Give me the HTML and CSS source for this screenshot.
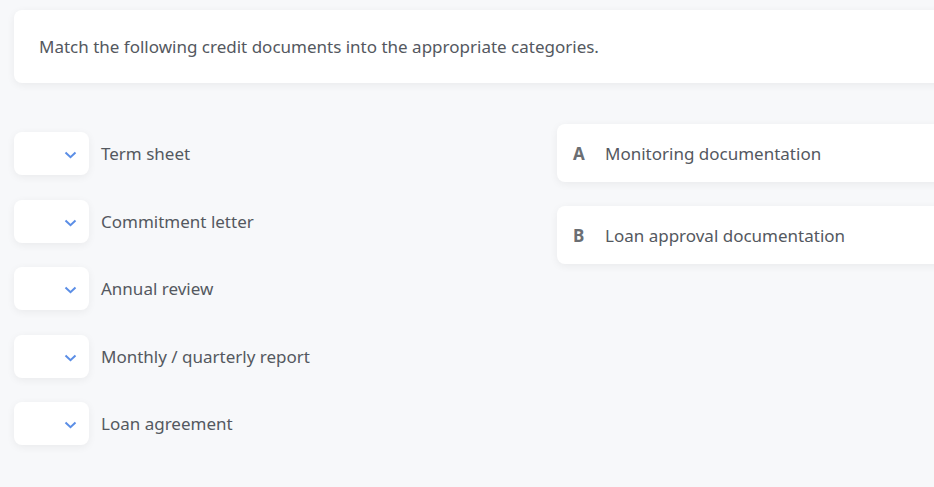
FILE: index.html
```html
<!DOCTYPE html>
<html lang="en">
<head>
    <meta charset="UTF-8">
    <meta name="viewport" content="width=device-width, initial-scale=1.0">
    <title>Matching question</title>
    <link rel="stylesheet" href="styles.css">
</head>
<body>
    <div class="page">
        <div class="question">
            <p>Match the following credit documents into the appropriate categories.</p>
        </div>
        <div class="match">
            <ul class="items">
                <li class="item">
                    <div class="select"><svg width="13" height="8" viewBox="0 0 13 8"><path d="M1.5 1.5 6.5 6.2 11.5 1.5" fill="none" stroke="#5b8ee6" stroke-width="2"/></svg></div>
                    <span>Term sheet</span>
                </li>
                <li class="item">
                    <div class="select"><svg width="13" height="8" viewBox="0 0 13 8"><path d="M1.5 1.5 6.5 6.2 11.5 1.5" fill="none" stroke="#5b8ee6" stroke-width="2"/></svg></div>
                    <span>Commitment letter</span>
                </li>
                <li class="item">
                    <div class="select"><svg width="13" height="8" viewBox="0 0 13 8"><path d="M1.5 1.5 6.5 6.2 11.5 1.5" fill="none" stroke="#5b8ee6" stroke-width="2"/></svg></div>
                    <span>Annual review</span>
                </li>
                <li class="item">
                    <div class="select"><svg width="13" height="8" viewBox="0 0 13 8"><path d="M1.5 1.5 6.5 6.2 11.5 1.5" fill="none" stroke="#5b8ee6" stroke-width="2"/></svg></div>
                    <span>Monthly / quarterly report</span>
                </li>
                <li class="item">
                    <div class="select"><svg width="13" height="8" viewBox="0 0 13 8"><path d="M1.5 1.5 6.5 6.2 11.5 1.5" fill="none" stroke="#5b8ee6" stroke-width="2"/></svg></div>
                    <span>Loan agreement</span>
                </li>
            </ul>
            <ul class="categories">
                <li class="category"><b>A</b><span>Monitoring documentation</span></li>
                <li class="category"><b>B</b><span>Loan approval documentation</span></li>
            </ul>
        </div>
    </div>
</body>
</html>
```

FILE: styles.css
```css
body {
    font-family: "Noto Sans", "Open Sans", sans-serif;
    background-color: #f7f8fa;
    color: #545860;
    margin: 0;
    overflow: hidden;
}
.page {
    width: 1086px;
    padding: 10px 14px;
}
.question {
    background: white;
    border-radius: 8px;
    box-shadow: 0 2px 8px rgba(0, 0, 0, 0.06);
    height: 73px;
    display: flex;
    align-items: center;
    padding: 0 25px;
    box-sizing: border-box;
}
.question p {
    margin: 0;
    font-size: 17px;
}
.match {
    display: grid;
    grid-template-columns: 529px 529px;
    gap: 14px;
    margin-top: 41px;
}
ul {
    list-style: none;
    margin: 0;
    padding: 0;
}
.items {
    padding-top: 8px;
}
.item {
    display: flex;
    align-items: center;
    height: 43px;
    margin-bottom: 24.5px;
    font-size: 17px;
}
.select {
    width: 75px;
    height: 43px;
    background: white;
    border-radius: 8px;
    box-shadow: 0 2px 8px rgba(0, 0, 0, 0.06);
    display: flex;
    align-items: center;
    justify-content: flex-end;
    padding-right: 12px;
    box-sizing: border-box;
    margin-right: 12px;
}
.select svg {
    display: block;
    margin-top: 3px;
}
.category {
    background: white;
    border-radius: 8px;
    box-shadow: 0 2px 8px rgba(0, 0, 0, 0.06);
    height: 58px;
    display: flex;
    align-items: center;
    padding-left: 16px;
    margin-bottom: 24px;
    font-size: 17px;
}
.category b {
    width: 32px;
    color: #6b6e73;
}
```
